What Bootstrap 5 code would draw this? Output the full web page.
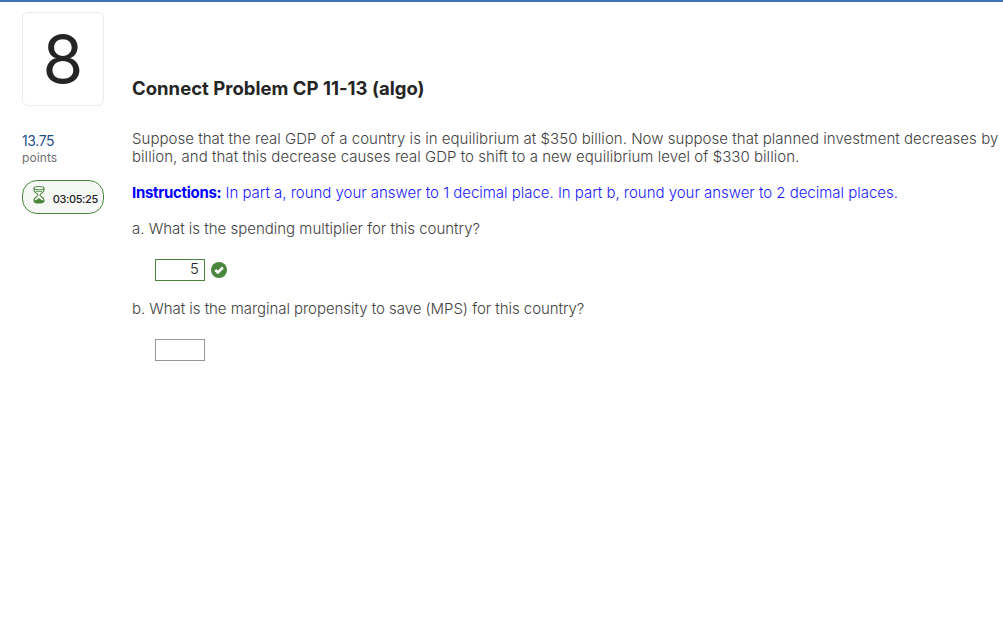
<!DOCTYPE html>
<html lang="en">
<head>
  <meta charset="UTF-8" />
  <meta name="viewport" content="width=device-width, initial-scale=1.0"/>
  <title>Connect Problem CP 11-13 (algo)</title>
  <link href="https://cdn.jsdelivr.net/npm/bootstrap@5.3.3/dist/css/bootstrap.min.css" rel="stylesheet"/>
  <style>
    body {
      font-family: Inter, "Open Sans", sans-serif;
      border-top: 2px solid #3a75b8;
      height: 622px;
      overflow: hidden;
      background: #fff;
    }
    .side-panel {
      width: 82px;
      margin: 10px 28px 0 22px;
    }
    .question-number {
      height: 94px;
      border: 1px solid #ececec;
      border-radius: 6px;
      font-size: 66px;
      font-weight: 400;
      line-height: 1;
      color: #252525;
    }
    .point-value {
      margin-top: 26px;
      font-size: 14px;
      line-height: 17px;
      letter-spacing: -0.4px;
      color: #1f4e8c;
    }
    .point-label {
      margin-top: 1px;
      font-size: 12px;
      line-height: 16px;
      letter-spacing: 0.1px;
      color: #6e6e6e;
    }
    .timer {
      height: 34px;
      margin-top: 14px;
      padding: 3px 5px 0 10px;
      border: 1px solid #4a873c;
      border-radius: 15px;
      background: #f6f8f6;
      font-size: 11px;
      font-weight: 500;
      letter-spacing: -0.35px;
      color: #222;
    }
    .timer svg {
      margin-top: -7px;
    }
    .timer span {
      padding-top: 2px;
    }
    .question-body {
      padding-top: 76px;
      font-size: 15px;
      line-height: 18px;
      font-weight: 300;
      letter-spacing: 0.035px;
      color: #424242;
    }
    .question-title {
      margin: 0 0 32px;
      font-size: 18.5px;
      line-height: 20px;
      font-weight: 700;
      letter-spacing: 0.02px;
      color: #252525;
    }
    .instructions {
      color: #1a1aff;
      letter-spacing: -0.02px;
    }
    .instructions strong {
      font-weight: 700;
      color: #00f;
      letter-spacing: -0.3px;
    }
    .question-body p {
      margin-bottom: 18px;
    }
    .part-a {
      letter-spacing: -0.01px;
    }
    .part-b {
      letter-spacing: -0.05px;
    }
    .answer-row {
      height: 22px;
      margin: 21px 0 19px 23px;
    }
    .answer-box {
      width: 50px;
      height: 22px;
      padding: 0 5px 3px 0;
      border: 1px solid #999;
      border-radius: 0;
      font-size: 15px;
      font-weight: 300;
      color: #252525;
      text-align: right;
      outline: 0;
    }
    .answer-box.correct {
      border-color: #4a873c;
    }
  </style>
</head>
<body>
  <div class="d-flex">
    <aside class="side-panel flex-shrink-0">
      <div class="question-number d-flex align-items-center justify-content-center">8</div>
      <div class="point-value">13.75</div>
      <div class="point-label">points</div>
      <div class="timer d-flex align-items-center justify-content-between">
        <svg width="12" height="18" viewBox="0 0 11 18" preserveAspectRatio="none" fill="none" stroke="#4a873c">
          <ellipse cx="5.5" cy="2.2" rx="4.6" ry="1.6"/>
          <path d="M1 2.5v2C1 6.700 4.600 7.300 4.600 9S1 11.400 1 13.600v2.200M10 2.500v2c0 2.200-3.600 2.800-3.600 4.500s3.600 2.400 3.600 4.600v2.200"/>
          <path d="M2.500 5.500h6" stroke-width=".7"/>
          <path d="M.8 14.600c2-.3 3.400-1.300 4.700-2.600 1.300 1.300 2.700 2.300 4.700 2.600v1.400c-1 2-8.400 2-9.400 0z" fill="#4a873c" stroke="none"/>
        </svg>
        <span>03:05:25</span>
      </div>
    </aside>

    <main class="question-body text-nowrap">
      <h1 class="question-title">Connect Problem CP 11-13 (algo)</h1>
      <p>Suppose that the real GDP of a country is in equilibrium at $350 billion. Now suppose that planned investment decreases by<br>
        billion, and that this decrease causes real GDP to shift to a new equilibrium level of $330 billion.</p>
      <p class="instructions"><strong>Instructions:</strong> In part a, round your answer to 1 decimal place. In part b, round your answer to 2 decimal places.</p>
      <p class="part-a">a. What is the spending multiplier for this country?</p>
      <div class="answer-row d-flex align-items-center">
        <input type="text" class="answer-box correct" value="5" aria-label="Answer a" />
        <svg class="ms-1" width="20" height="20" viewBox="0 0 20 20">
          <circle cx="10" cy="10" r="8" fill="#4a873c"/>
          <path d="M6.300 10l2.600 2.500 5-5" fill="none" stroke="#fff" stroke-width="2.600"/>
        </svg>
      </div>
      <p class="part-b">b. What is the marginal propensity to save (MPS) for this country?</p>
      <div class="answer-row d-flex align-items-center">
        <input type="text" class="answer-box" aria-label="Answer b" />
      </div>
    </main>
  </div>
  <script src="https://cdn.jsdelivr.net/npm/bootstrap@5.3.3/dist/js/bootstrap.bundle.min.js"></script>
</body>
</html>
